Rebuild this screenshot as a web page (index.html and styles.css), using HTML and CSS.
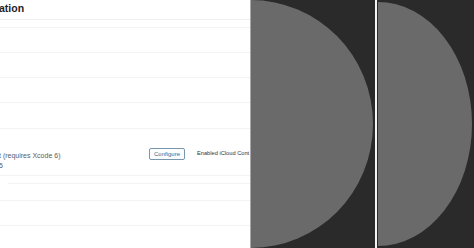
FILE: index.html
```html
<!DOCTYPE html>
<html>
<head>
<meta charset="utf-8">
<link rel="stylesheet" href="styles.css">
</head>
<body>
<div class="page">
  <section class="left">
    <div class="title-row"><h1 class="title">ation</h1></div>
    <div class="strip"></div>
    <div class="row"></div>
    <div class="row"></div>
    <div class="row"></div>
    <div class="row r5"></div>
    <div class="row tall">
      <div class="desc">
        <div class="line">t (requires Xcode 6)</div>
        <div class="line">5</div>
      </div>
      <button class="btn">Configure</button>
      <div class="status">Enabled iCloud Cont</div>
    </div>
    <div class="strip2"></div>
    <div class="row r-short"></div>
    <div class="row"></div>
    <div class="row last"></div>
  </section>
  <section class="panel p1"><div class="shape"></div></section>
  <div class="divider"></div>
  <section class="panel p2"><div class="shape"></div></section>
</div>
</body>
</html>
```
FILE: styles.css
```css
html, body {
  margin: 0;
  padding: 0;
  background: #ffffff;
}
.page {
  display: flex;
  width: 474px;
  height: 248px;
  overflow: hidden;
  font-family: "Liberation Sans", Arial, sans-serif;
}
.left {
  width: 250px;
  flex: none;
  overflow: hidden;
  background: #ffffff;
  display: flex;
  flex-direction: column;
}
.title-row {
  height: 19px;
  border-bottom: 1px solid #efefef;
  flex: none;
}
.title {
  margin: 0 0 0 -1px;
  font-size: 10.5px;
  font-weight: bold;
  color: #1e1e1e;
  line-height: 16px;
  white-space: nowrap;
}
.strip {
  height: 7px;
  border-bottom: 1px solid #f3f3f3;
  flex: none;
}
.row {
  height: 24px;
  border-bottom: 1px solid #f3f3f3;
  flex: none;
}
.r5 { height: 25px; }
.tall {
  height: 46px;
  display: flex;
  align-items: flex-start;
}
.desc {
  width: 150px;
  flex: none;
  margin-left: -1px;
  padding-top: 22px;
  font-size: 7px;
  line-height: 9.5px;
  color: #5c5c5c;
  white-space: nowrap;
}
.btn {
  flex: none;
  width: 36px;
  height: 12px;
  padding: 0;
  margin: 19px 0 0 0;
  border: 1px solid #7896ad;
  border-radius: 2px;
  background: #fbfdff;
  color: #3c6a8b;
  font-family: "Liberation Sans", Arial, sans-serif;
  font-size: 6px;
  line-height: 10px;
}
.status {
  margin: 20px 0 0 12px;
  font-size: 5.7px;
  line-height: 8px;
  color: #333333;
  white-space: nowrap;
}
.strip2 {
  height: 7px;
  margin-left: 8px;
  border-bottom: 1px solid #f3f3f3;
  flex: none;
}
.r-short { height: 16px; }
.last { border-bottom: none; }
.panel {
  flex: none;
  height: 248px;
  background: #2a2a2a;
  display: flex;
  box-sizing: border-box;
}
.p1 {
  width: 125px;
  border-left: 1px solid #a8a8a8;
  padding: 0 2px 0 0;
}
.p2 {
  width: 97px;
  padding: 2px 2px 2px 1px;
}
.divider {
  width: 2px;
  flex: none;
  background: #f4f4f4;
}
.shape {
  flex: 1;
  background: #6a6a6a;
  border-radius: 0 100% 100% 0 / 0 50% 50% 0;
}
```
